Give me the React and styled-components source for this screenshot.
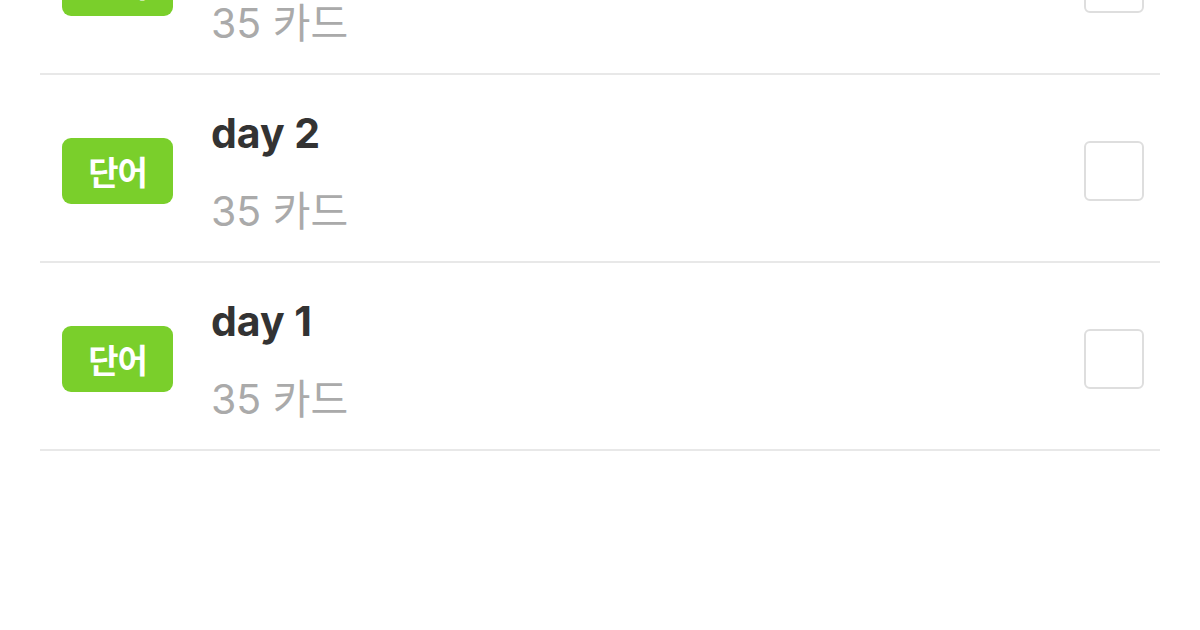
import React from 'react';
import styled, { createGlobalStyle } from 'styled-components';

const GlobalStyle = createGlobalStyle`
  html, body {
    margin: 0;
    padding: 0;
    background: #fff;
  }
  body {
    font-family: Inter, "Noto Sans CJK KR", sans-serif;
    -webkit-font-smoothing: antialiased;
  }
`;

const Viewport = styled.div`
  width: 1200px;
  height: 630px;
  overflow: hidden;
`;

// the list is scrolled, so the top row is partly hidden
const List = styled.ul`
  list-style: none;
  margin: -113px 40px 0;
  padding: 0;
`;

const Row = styled.li`
  display: flex;
  align-items: center;
  height: 180px;
  padding: 6px 16px 0 22px;
  border-bottom: 2px solid #e8e8e8;
`;

const Badge = styled.span`
  flex: none;
  display: flex;
  align-items: center;
  justify-content: center;
  width: 111px;
  height: 66px;
  border-radius: 9px;
  background: #7acf2b;
  color: #fff;
  font-family: "Noto Sans CJK KR", sans-serif;
  font-size: 33px;
  font-weight: 700;
  letter-spacing: -1px;
`;

const Info = styled.div`
  flex: 1;
  display: flex;
  flex-direction: column;
  gap: 30px;
  margin-left: 38px;
  margin-top: 2px;
`;

const Title = styled.div`
  font-size: 41px;
  line-height: 48px;
  font-weight: 700;
  color: #333;
`;

const Count = styled.div`
  font-size: 41px;
  line-height: 48px;
  font-weight: 400;
  color: #aaa;
`;

const Check = styled.span`
  flex: none;
  box-sizing: border-box;
  width: 60px;
  height: 60px;
  border: 2px solid #dedede;
  border-radius: 6px;
  background: #fff;
`;

const decks = [
  { id: 3, title: 'day 3', cards: 35 },
  { id: 2, title: 'day 2', cards: 35 },
  { id: 1, title: 'day 1', cards: 35 },
];

const App = () => (
  <Viewport>
    <GlobalStyle />
    <List>
      {decks.map(deck => (
        <Row key={deck.id}>
          <Badge>단어</Badge>
          <Info>
            <Title>{deck.title}</Title>
            <Count>{deck.cards} 카드</Count>
          </Info>
          <Check />
        </Row>
      ))}
    </List>
  </Viewport>
);

export default App;
